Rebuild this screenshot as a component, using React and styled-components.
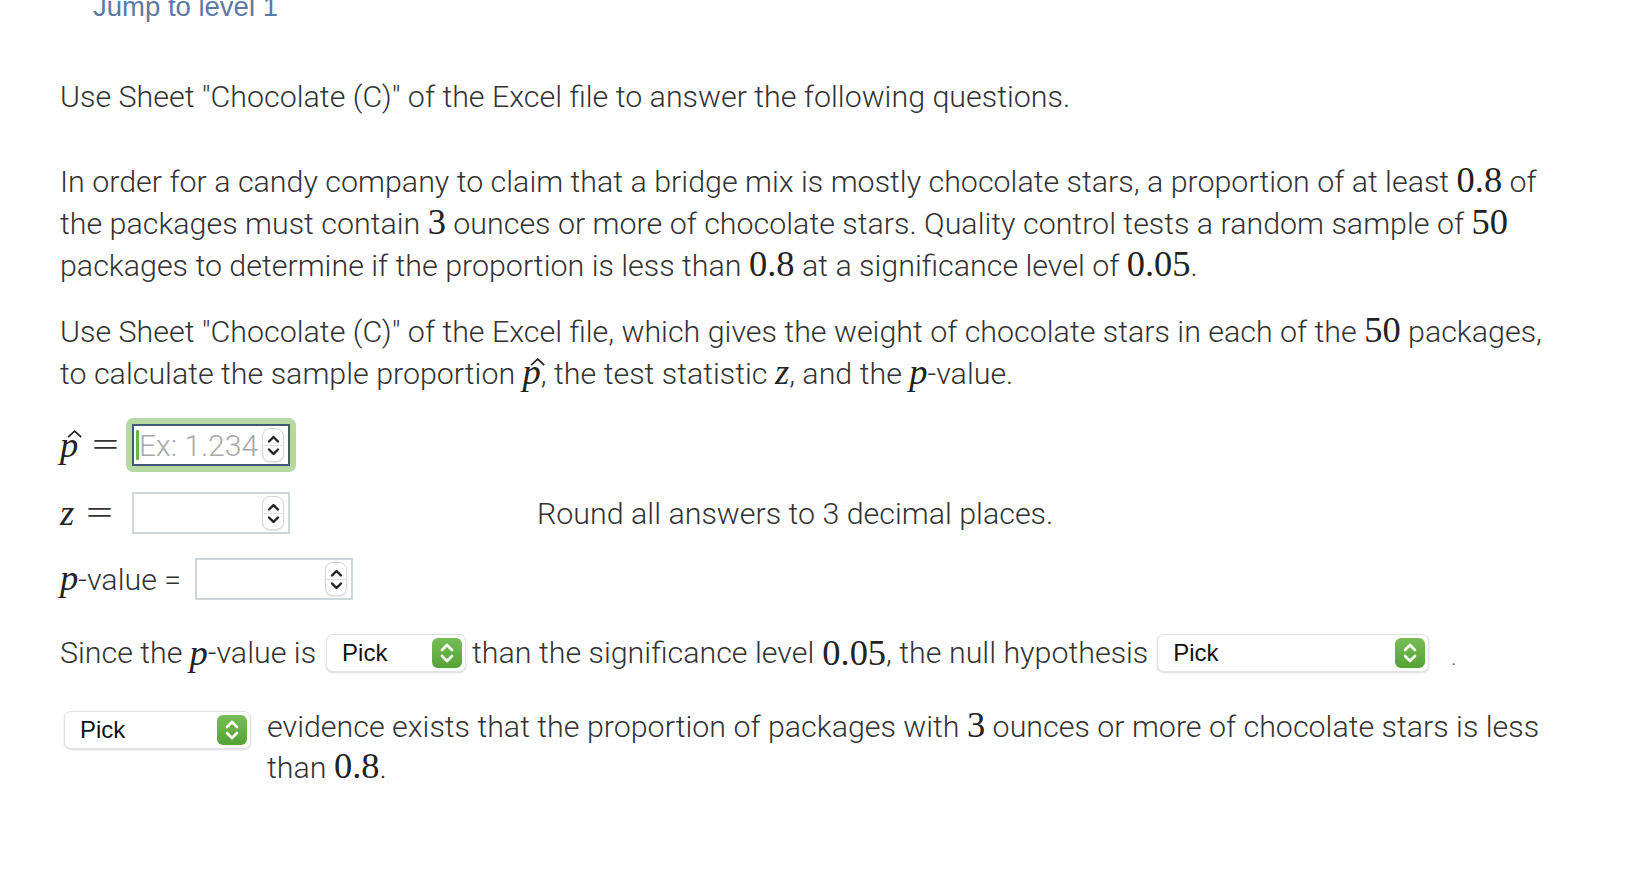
import React from 'react';
import styled, { createGlobalStyle } from 'styled-components';

const Global = createGlobalStyle`
  html, body {
    margin: 0;
    padding: 0;
    background: #ffffff;
  }
  body {
    font-family: Roboto, "Noto Sans", sans-serif;
    font-weight: 300;
    color: #333333;
    overflow: hidden;
  }
`;

const Page = styled.div`
  width: 1648px;
  height: 876px;
  padding-left: 60px;
  box-sizing: border-box;
`;

const JumpLink = styled.div`
  margin-top: -8px;
  padding-left: 33px;
  font-family: "Liberation Sans", Arial, sans-serif;
  font-weight: 400;
  font-size: 27.5px;
  line-height: 30px;
  color: #5b7aa3;
`;

const Para = styled.p`
  margin: ${p => p.$top}px 0 0 0;
  width: 1492px;
  font-size: 30.4px;
  line-height: 42px;
`;

const M = styled.span`
  font-family: "Liberation Serif", "DejaVu Serif", serif;
  font-weight: 400;
  font-size: 1.2em;
  line-height: 0;
  font-style: ${p => (p.$i ? 'italic' : 'normal')};
  color: #222;
`;

const HatWrap = styled.span`
  position: relative;
  display: inline-block;
  line-height: 1;
  svg {
    position: absolute;
    left: 0.2em;
    top: 0.1em;
    width: 0.42em;
    height: 0.22em;
  }
`;

const Hat = ({ children }) => (
  <HatWrap>
    {children}
    <svg viewBox="0 0 14 7" preserveAspectRatio="none">
      <path d="M1 6.2 L7 1 L13 6.2" fill="none" stroke="#222" strokeWidth="1.6" strokeLinejoin="miter" />
    </svg>
  </HatWrap>
);

const InputRow = styled.div`
  display: flex;
  align-items: center;
  height: ${p => p.$h}px;
  margin-top: ${p => p.$top}px;
  font-size: 30.4px;
`;

const Label = styled.div`
  width: ${p => p.$w}px;
  display: flex;
  align-items: center;
`;

const Eq = styled.span`
  display: inline-block;
  font-family: "Liberation Serif", "DejaVu Serif", serif;
  font-size: 34px;
  font-weight: 400;
  color: #333;
  margin-left: ${p => p.$ml || 0}px;
  transform: scaleX(1.4);
  transform-origin: left center;
`;

const Ring = styled.div`
  padding: 6px;
  border-radius: 7px;
  background: ${p => (p.$focus ? '#b6d8a2' : 'transparent')};
`;

const Box = styled.div`
  width: 158px;
  height: 42px;
  box-sizing: border-box;
  border: 2px solid ${p => (p.$focus ? '#41587c' : '#cfd6da')};
  background: #fff;
  display: flex;
  align-items: center;
  padding: 0 4px 0 2px;
`;

const Caret = styled.span`
  width: 3px;
  height: 30px;
  background: #6cb14a;
  border-radius: 1px;
  flex-shrink: 0;
`;

const Placeholder = styled.span`
  flex: 1;
  color: #a8a8a8;
  font-size: 30px;
  white-space: nowrap;
  overflow: hidden;
`;

const Spin = styled.div`
  margin-left: auto;
  width: 22px;
  height: 34px;
  box-sizing: border-box;
  border-radius: 8px;
  border: 1px solid #d8d8d8;
  box-shadow: 0 1px 2px rgba(0,0,0,0.12);
  background: #fff;
  display: flex;
  flex-direction: column;
  align-items: center;
  justify-content: center;
  flex-shrink: 0;
  svg { display: block; }
`;

const Divider = styled.div`
  width: 100%;
  height: 1px;
  background: #e6e6e6;
  margin: 1px 0;
`;

const Note = styled.div`
  margin-left: 241px;
  font-size: 30.4px;
`;

const Sentence = styled.div`
  margin-top: 27px;
  font-size: 30.4px;
  line-height: 42px;
  display: flex;
  align-items: center;
  white-space: nowrap;
`;

const Gap = styled.span`
  display: inline-block;
  width: ${p => p.$w}px;
`;

const Select = styled.div`
  width: ${p => p.$w}px;
  height: 38px;
  box-sizing: border-box;
  border: 1px solid #e2e2e2;
  border-radius: 7px;
  background: #fff;
  box-shadow: 0 1px 2px rgba(0,0,0,0.15);
  display: flex;
  align-items: center;
  padding: 0 3px 0 15px;
  margin: ${p => p.$m || '0'};
  flex-shrink: 0;
  font-family: "Liberation Sans", Arial, sans-serif;
  font-weight: 400;
  font-size: 24px;
  color: #111;
`;

const Arrows = styled.div`
  margin-left: auto;
  width: 30px;
  height: 30px;
  border-radius: 6px;
  background: linear-gradient(#78bd56, #56a236);
  display: flex;
  align-items: center;
  justify-content: center;
`;

const Dot = styled.span`
  margin-left: 22px;
  font-size: 22px;
  align-self: flex-end;
  line-height: 32px;
  color: #555;
`;

const Conclusion = styled.div`
  margin-top: 34px;
  display: flex;
  align-items: flex-start;
  width: 1492px;
`;

const ConclusionText = styled.div`
  margin-left: 16px;
  font-size: 30.4px;
  line-height: 41px;
  margin-top: -2px;
`;

const Spinner = () => (
  <Spin>
    <svg width="13" height="10" viewBox="0 0 13 10"><path d="M2 7.5 L6.5 3 L11 7.5" fill="none" stroke="#222" strokeWidth="2.4" strokeLinecap="round" strokeLinejoin="round" /></svg>
    <Divider />
    <svg width="13" height="10" viewBox="0 0 13 10"><path d="M2 2.5 L6.5 7 L11 2.5" fill="none" stroke="#222" strokeWidth="2.4" strokeLinecap="round" strokeLinejoin="round" /></svg>
  </Spin>
);

const PickSelect = ({ w, m }) => (
  <Select $w={w} $m={m}>
    Pick
    <Arrows>
      <svg width="16" height="22" viewBox="0 0 16 22">
        <path d="M3 8 L8 3 L13 8" fill="none" stroke="#fff" strokeWidth="2.6" strokeLinecap="round" strokeLinejoin="round" />
        <path d="M3 14 L8 19 L13 14" fill="none" stroke="#fff" strokeWidth="2.6" strokeLinecap="round" strokeLinejoin="round" />
      </svg>
    </Arrows>
  </Select>
);

export default function App() {
  return (
    <Page>
      <Global />
      <JumpLink>Jump to level 1</JumpLink>

      <Para $top={54}>Use Sheet "Chocolate (C)" of the Excel file to answer the following questions.</Para>

      <Para $top={43}>
        In order for a candy company to claim that a bridge mix is mostly chocolate stars, a proportion of at least <M>0.8</M> of
        the packages must contain <M>3</M> ounces or more of chocolate stars. Quality control tests a random sample of <M>50</M> packages
        to determine if the proportion is less than <M>0.8</M> at a significance level of <M>0.05</M>.
      </Para>

      <Para $top={24}>
        Use Sheet "Chocolate (C)" of the Excel file, which gives the weight of chocolate stars in each of the <M>50</M> packages,
        to calculate the sample proportion <M $i><Hat>p</Hat></M>, the test statistic <M $i>z</M>, and the <M $i>p</M>-value.
      </Para>

      <InputRow $h={52} $top={24}>
        <Label $w={66}>
          <M $i><Hat>p</Hat></M>
          <Eq $ml={14}>=</Eq>
        </Label>
        <Ring $focus>
          <Box $focus>
            <Caret />
            <Placeholder>Ex: 1.234</Placeholder>
            <Spinner />
          </Box>
        </Ring>
      </InputRow>

      <InputRow $h={52} $top={16}>
        <Label $w={66}>
          <M $i>z</M>
          <Eq $ml={12}>=</Eq>
        </Label>
        <Ring>
          <Box>
            <Spinner />
          </Box>
        </Ring>
        <Note>Round all answers to 3 decimal places.</Note>
      </InputRow>

      <InputRow $h={52} $top={14}>
        <Label $w={129}>
          <span><M $i>p</M>-value =</span>
        </Label>
        <Ring>
          <Box>
            <Spinner />
          </Box>
        </Ring>
      </InputRow>

      <Sentence>
        Since the <Gap $w={7} /><M $i>p</M>-value is
        <PickSelect w={140} m="0 6px 0 10px" />
        than the significance level <Gap $w={8} /><M>0.05</M>, the null hypothesis
        <PickSelect w={272} m="0 0 0 9px" />
        <Dot>.</Dot>
      </Sentence>

      <Conclusion>
        <PickSelect w={187} m="3px 0 0 4px" />
        <ConclusionText>
          evidence exists that the proportion of packages with <M>3</M> ounces or more of chocolate stars is less than <M>0.8</M>.
        </ConclusionText>
      </Conclusion>
    </Page>
  );
}
